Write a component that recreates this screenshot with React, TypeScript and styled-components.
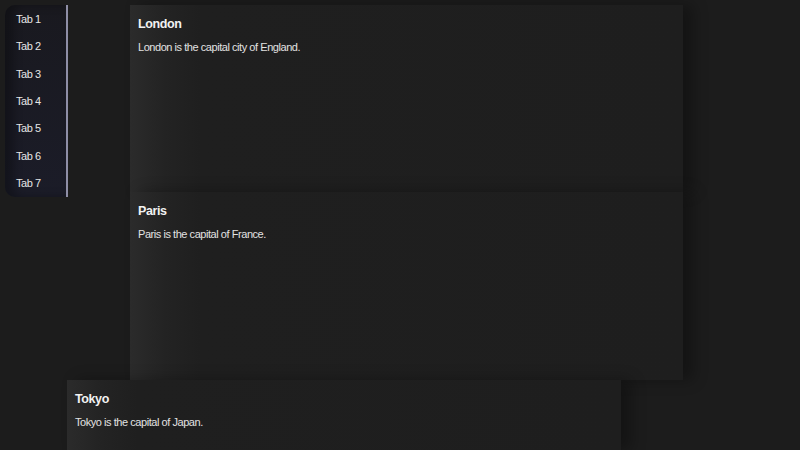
import { styled, createGlobalStyle } from 'styled-components'

const GlobalStyle = createGlobalStyle`
	html,
	body {
		margin: 0;
		padding: 0;
		background: #1c1c1c;
		font-family: 'Liberation Sans', Arial, sans-serif;
		color: #e8e8e8;
		overflow: hidden;
	}
`

const tabs = ['Tab 1', 'Tab 2', 'Tab 3', 'Tab 4', 'Tab 5', 'Tab 6', 'Tab 7']

const cities = [
	{ name: 'London', text: 'London is the capital city of England.', col: '3 / 5', height: 187 },
	{ name: 'Paris', text: 'Paris is the capital of France.', col: '3 / 5', height: 188 },
	{ name: 'Tokyo', text: 'Tokyo is the capital of Japan.', col: '2 / 4', height: 70 },
]

export default function App() {
	return (
		<>
			<GlobalStyle />
			<Page>
				<TabList>
					{tabs.map((t) => (
						<TabButton key={t}>{t}</TabButton>
					))}
				</TabList>
				{cities.map((c) => (
					<Panel key={c.name} $col={c.col} $height={c.height}>
						<Title>{c.name}</Title>
						<Body>{c.text}</Body>
					</Panel>
				))}
			</Page>
		</>
	)
}

const Page = styled.div`
	display: grid;
	grid-template-columns: 62px 63px 491px 62px;
	grid-template-rows: 187px 188px auto;
	padding: 5px 5px 0;
	height: 450px;
	box-sizing: border-box;
	overflow: hidden;
`

const TabList = styled.div`
	grid-column: 1;
	grid-row: 1;
	align-self: start;
	width: 63px;
	height: 192px;
	display: flex;
	flex-direction: column;
	background: linear-gradient(to bottom, #19191f 0%, #1b1c28 100%);
	border-right: 2px solid #8e8ea6;
	border-radius: 10px 0 0 10px;
	box-shadow: inset 8px 0 10px rgba(0, 0, 0, 0.3);
	box-sizing: border-box;
	z-index: 1;
`

const TabButton = styled.div`
	flex: 1;
	display: flex;
	align-items: center;
	padding-left: 11px;
	font-size: 11px;
	letter-spacing: -0.45px;
	color: #e6e6e6;
	cursor: pointer;
`

const Panel = styled.div<{ $col: string; $height: number }>`
	grid-column: ${(p) => p.$col};
	height: ${(p) => p.$height}px;
	padding: 11px 8px 0;
	box-sizing: border-box;
	background: linear-gradient(to right, #2b2b2b 0px, #232323 35px, #1f1f1f 70px, #1e1e1e 100%);
	box-shadow: 10px 0 14px rgba(0, 0, 0, 0.3);
`

const Title = styled.div`
	font-size: 12.5px;
	font-weight: bold;
	letter-spacing: -0.4px;
	line-height: 16px;
	color: #f2f2f2;
`

const Body = styled.div`
	margin-top: 8px;
	font-size: 11px;
	letter-spacing: -0.45px;
	line-height: 14px;
	color: #e2e2e2;
`
